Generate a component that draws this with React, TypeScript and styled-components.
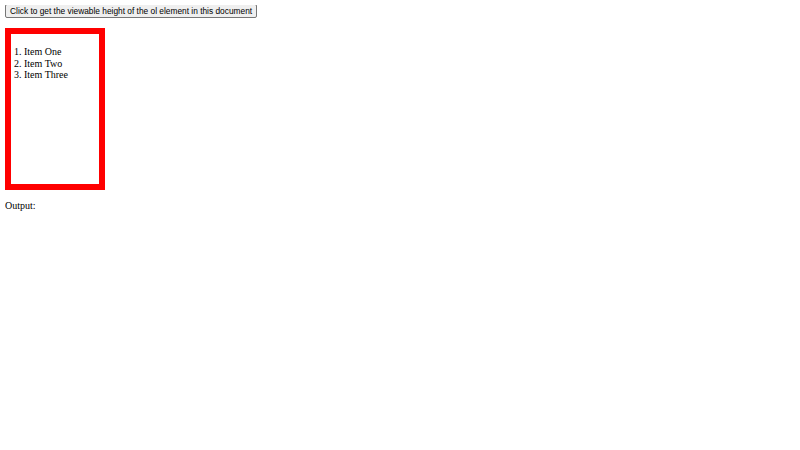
import React, { useState } from 'react';
import styled, { createGlobalStyle } from 'styled-components';

const GlobalStyle = createGlobalStyle`
  body {
    margin: 5px;
    font-family: "Liberation Serif", "Times New Roman", serif;
    font-size: 10px;
    line-height: 11.5px;
    color: #000;
    background: #fff;
  }
`;

const Page = styled.div`
  display: flex;
  flex-direction: column;
  align-items: flex-start;
`;

const ActionButton = styled.button`
  margin: -1px 0 0 0;
  height: 14px;
  padding: 0 4px;
  font-family: "Liberation Sans", Arial, sans-serif;
  font-size: 8.35px;
  line-height: 12px;
  color: #000;
  background: #efefef;
  border: 1px solid #767676;
  border-radius: 2px;
  cursor: pointer;
`;

const ItemList = styled.ol`
  box-sizing: border-box;
  width: 100px;
  height: 162px;
  margin: 10px 0;
  padding: 12px 0 0 3px;
  border: 6px solid #f00;
  list-style: decimal inside;
`;

const Output = styled.div`
  margin: 0;
`;

export default function App() {
  const [height, setHeight] = useState<number | null>(null);
  const items = ['Item One', 'Item Two', 'Item Three'];

  return (
    <Page>
      <GlobalStyle />
      <ActionButton onClick={() => setHeight(150)}>
        Click to get the viewable height of the ol element in this document
      </ActionButton>
      <ItemList>
        {items.map((item) => (
          <li key={item}>{item}</li>
        ))}
      </ItemList>
      <Output>Output:{height !== null ? ` ${height}` : ''}</Output>
    </Page>
  );
}
